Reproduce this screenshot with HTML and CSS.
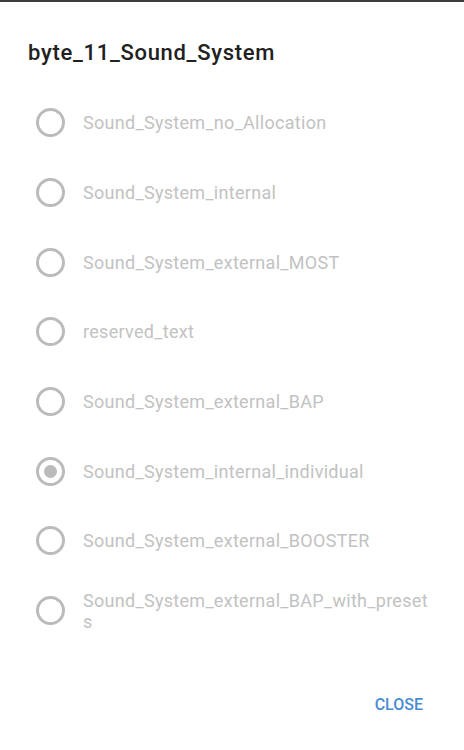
FILE: index.html
```html
<!DOCTYPE html>
<html lang="en">
<head>
<meta charset="utf-8">
<title>byte_11_Sound_System</title>
<link rel="stylesheet" href="styles.css">
</head>
<body>
<div class="dialog">
  <h1 class="title">byte_11_Sound_System</h1>
  <ul class="options">
    <li class="option"><span class="radio"></span><span class="label">Sound_System_no_Allocation</span></li>
    <li class="option"><span class="radio"></span><span class="label">Sound_System_internal</span></li>
    <li class="option"><span class="radio"></span><span class="label">Sound_System_external_MOST</span></li>
    <li class="option"><span class="radio"></span><span class="label">reserved_text</span></li>
    <li class="option"><span class="radio"></span><span class="label">Sound_System_external_BAP</span></li>
    <li class="option"><span class="radio checked"></span><span class="label">Sound_System_internal_individual</span></li>
    <li class="option"><span class="radio"></span><span class="label">Sound_System_external_BOOSTER</span></li>
    <li class="option"><span class="radio"></span><span class="label">Sound_System_external_BAP_with_presets</span></li>
  </ul>
  <div class="actions">
    <button class="btn" type="button">Close</button>
  </div>
</div>
</body>
</html>
```

FILE: styles.css
```css
html, body {
  margin: 0;
  padding: 0;
  background: #ffffff;
}

body {
  font-family: Roboto, "Noto Sans", "Liberation Sans", sans-serif;
  border-top: 2px solid #3c3c3c;
  min-height: 748px;
}

.dialog {
  display: flex;
  flex-direction: column;
}

.title {
  margin: 37px 0 0 0;
  padding-left: 28px;
  font-size: 22px;
  line-height: 28px;
  font-weight: 500;
  letter-spacing: 0.7px;
  color: #212121;
}

.options {
  list-style: none;
  margin: 21px 0 0 0;
  padding: 0;
}

.option {
  display: flex;
  align-items: center;
  min-height: 69.7px;
  padding: 0 33px 0 36px;
}

.radio {
  flex: 0 0 auto;
  width: 29px;
  height: 29px;
  box-sizing: border-box;
  border: 3px solid #bbbbbb;
  border-radius: 50%;
  display: flex;
  align-items: center;
  justify-content: center;
}

.radio.checked::after {
  content: "";
  width: 13px;
  height: 13px;
  border-radius: 50%;
  background: #bbbbbb;
}

.label {
  margin-left: 18px;
  font-size: 18px;
  line-height: 21px;
  letter-spacing: 0.3px;
  color: #c2c2c2;
  word-break: break-all;
  min-width: 0;
}

.actions {
  display: flex;
  justify-content: flex-end;
  margin-top: 49px;
  padding-right: 41px;
}

.btn {
  border: 0;
  background: transparent;
  padding: 0;
  font-family: inherit;
  font-size: 16px;
  line-height: 20px;
  font-weight: 500;
  text-transform: uppercase;
  color: #4a8cd4;
  cursor: pointer;
}
```
